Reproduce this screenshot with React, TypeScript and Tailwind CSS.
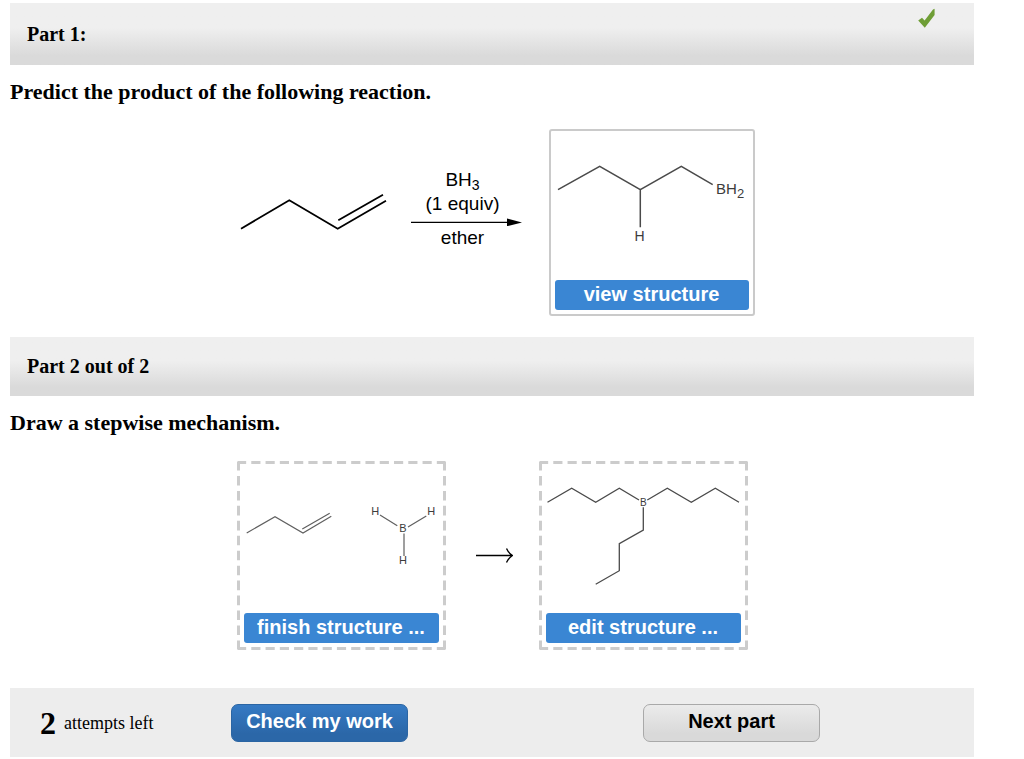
import type { ReactNode } from "react";

const serif = "font-['Liberation_Serif','Times_New_Roman',serif]";
const sans = "font-['Liberation_Sans',Arial,sans-serif]";

function PartHeader({ children, className, mark }: { children: ReactNode; className: string; mark?: ReactNode }) {
  return (
    <header
      className={`flex items-start justify-between bg-linear-to-b from-[#efefef] from-40% to-[#dadada] to-85% pr-[38px] pl-[17px] ${className}`}
    >
      <h2 className="text-[20px] leading-7 font-bold">{children}</h2>
      {mark}
    </header>
  );
}

function CheckMark() {
  return (
    <svg role="img" aria-label="Correct" width="18" height="20" viewBox="0 0 18 20" className="-mt-3">
      <path d="M0.2 12.6 4 9.8 6.6 12.4 15 1.4 16.6 0.8V7L6.8 19.8Z" fill="#6f9e36" />
    </svg>
  );
}

function DashedFrame() {
  const line = { stroke: "#cccccc", strokeWidth: 6, strokeDasharray: "9 5" };
  return (
    <svg aria-hidden="true" className="pointer-events-none absolute inset-0 size-full overflow-hidden rounded-[2px]">
      <line x1="0" y1="0" x2="100%" y2="0" pathLength={205} {...line} />
      <line x1="0" y1="100%" x2="100%" y2="100%" pathLength={205} {...line} />
      <line x1="0" y1="0" x2="0" y2="100%" pathLength={177} {...line} />
      <line x1="100%" y1="0" x2="100%" y2="100%" pathLength={177} {...line} />
    </svg>
  );
}

function StructureButton({ children }: { children: ReactNode }) {
  return (
    <button
      type="button"
      className={`h-[30px] w-full cursor-pointer rounded-[3px] bg-[#3a86d3] pb-0.5 text-[20px] leading-7 font-bold text-white ${sans}`}
    >
      {children}
    </button>
  );
}

function DashedCard({ label, children }: { label: string; children: ReactNode }) {
  return (
    <div className="relative p-[7px]">
      <DashedFrame />
      {children}
      <StructureButton>{label}</StructureButton>
    </div>
  );
}

const atom = `fill-[#3c3c3c] ${sans}`;

export default function App() {
  return (
    <main className={`min-h-screen bg-white pt-[3px] pr-[50px] pl-[10px] text-black ${serif}`}>
      <section>
        <PartHeader className="py-[17px]" mark={<CheckMark />}>
          Part 1:
        </PartHeader>
        <p className="mt-[13px] text-[22px] leading-7 font-bold">Predict the product of the following reaction.</p>
        <div className="mt-[23px] flex items-start justify-center gap-6 pl-[10px]">
          <svg
            role="img"
            aria-label="1-butene"
            width="147"
            height="44"
            className="mt-[61px]"
            fill="none"
            stroke="#000"
            strokeWidth="1.8"
          >
            <path d="M1 38.7 49.3 10.3 97.7 38.7 146 10.7M98.3 30.3 143 4.7" />
          </svg>
          <div className={`mt-[39px] flex w-[114px] flex-col text-[19px] leading-6 ${sans}`}>
            <span className="pr-[10px] text-center">
              BH<sub className="bottom-[-4px] text-[14px]">3</sub>
            </span>
            <span className="pr-[10px] text-center">(1 equiv)</span>
            <svg aria-hidden="true" width="111" height="10" viewBox="0 0 111 10">
              <path d="M0 6.4H98" stroke="#000" strokeWidth="1.4" />
              <path d="M96 2.6 111 6.4 96 10.2Z" />
            </svg>
            <span className="pr-[10px] text-center">ether</span>
          </div>
          <div className="rounded-[3px] border-2 border-[#cacaca] p-1">
            <svg role="img" aria-label="Butylborane" width="194" height="145" viewBox="0 0 194 145">
              <path
                d="M3 54.7 44.7 31.3 85.3 54.7 126.3 31.3 157.7 49.7M85.3 54.7V92.3"
                fill="none"
                stroke="#4a4a4a"
                strokeWidth="1.5"
              />
              <text x="161" y="59.3" fontSize="15" className={atom}>
                BH
              </text>
              <text x="182" y="63.3" fontSize="13" className={atom}>
                2
              </text>
              <text x="84.5" y="105.5" fontSize="14" textAnchor="middle" className={atom}>
                H
              </text>
            </svg>
            <StructureButton>view structure</StructureButton>
          </div>
        </div>
      </section>

      <section className="mt-[21px]">
        <PartHeader className="pt-[15px] pb-4">Part 2 out of 2</PartHeader>
        <p className="mt-[13px] text-[22px] leading-7 font-bold">Draw a stepwise mechanism.</p>
        <div className="mt-6 flex items-center justify-center gap-[26px]">
          <DashedCard label="finish structure ...">
            <svg role="img" aria-label="1-butene and borane" width="195" height="145" viewBox="0 0 195 145">
              <path
                d="M2.7 65 31 48.7 59 65 87.3 48.3M58.3 61 85.7 45.3M136 47 153.3 57.7M164 59 182.3 48M160 65.5V88"
                fill="none"
                stroke="#606060"
                strokeWidth="1.2"
              />
              <g fontSize="11" textAnchor="middle" className={atom}>
                <text x="131.3" y="47.3">H</text>
                <text x="187.3" y="47.3">H</text>
                <text x="159" y="63.7">B</text>
                <text x="159" y="96">H</text>
              </g>
            </svg>
          </DashedCard>
          <svg aria-hidden="true" width="41" height="16" viewBox="0 0 41 16" fill="none" stroke="#000" strokeWidth="1.4">
            <path d="M4 7.5H40M34.5 0.5Q36.5 5 40.5 7.5 36.5 10 34.5 14.5" />
          </svg>
          <DashedCard label="edit structure ...">
            <svg role="img" aria-label="Tributylborane" width="195" height="145" viewBox="0 0 195 145">
              <path
                d="M1.5 34.3 25.7 20.3 49.7 34.3 73.3 20.3 93 32M101.3 32 121.3 20.3 145.3 34.3 169.3 20.3 193 34.3M97.3 39.3V62L73.3 75.7V102.7L49.7 116.3"
                fill="none"
                stroke="#4a4a4a"
                strokeWidth="1.3"
              />
              <text x="97.3" y="37.7" fontSize="10" textAnchor="middle" className={atom}>
                B
              </text>
            </svg>
          </DashedCard>
        </div>
      </section>

      <footer className="mt-[38px] flex items-center bg-[#ededed] pt-4 pb-[15px]">
        <p className="flex w-[221px] items-center gap-2 pl-[30px] text-[18px] leading-9">
          <strong className="text-[32px]">2</strong>
          attempts left
        </p>
        <button
          type="button"
          className={`h-[38px] w-[177px] cursor-pointer rounded-[7px] border border-[#2b65a3] bg-linear-to-b from-[#357ac4] to-[#2b67a8] to-80% pb-1 text-[20px] leading-7 font-bold text-white ${sans}`}
        >
          Check my work
        </button>
        <button
          type="button"
          className={`ml-[235px] h-[38px] w-[177px] cursor-pointer rounded-[7px] border border-[#a9a9a9] bg-linear-to-b from-[#ebebeb] to-[#d9d9d9] to-80% pb-1 text-[20px] leading-7 font-bold ${sans}`}
        >
          Next part
        </button>
      </footer>
    </main>
  );
}
